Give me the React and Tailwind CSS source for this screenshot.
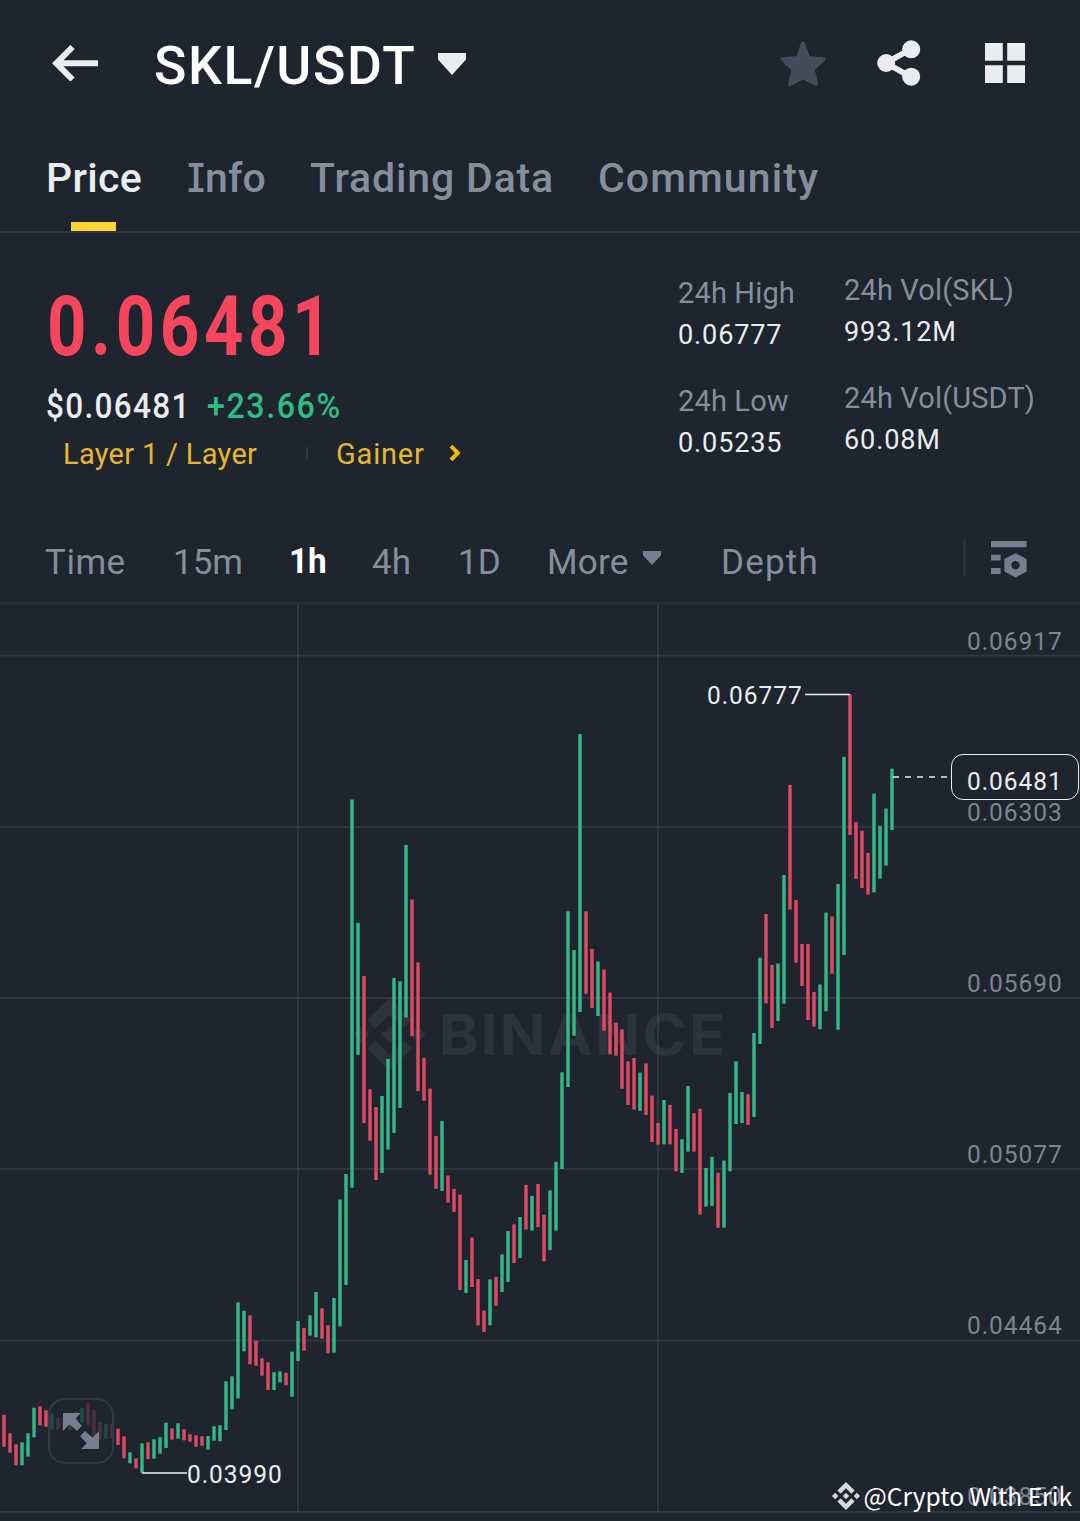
import React from "react";

const UP = "#35b887";
const DOWN = "#e04a63";

// One entry per hour: direction, high and low in chart pixels.
const CANDLES = [
  ["r", 1414.7, 1446.7], ["r", 1433.3, 1452.7], ["r", 1444.3, 1465.3], ["g", 1442.3, 1465.3], ["g", 1433.3, 1456.7],
  ["g", 1407.7, 1437.3], ["r", 1406.3, 1425.3], ["r", 1410.3, 1426.7], ["g", 1413.3, 1429.3], ["r", 1417.3, 1429.3],
  ["r", 1418, 1430], ["g", 1416, 1430], ["g", 1412, 1427], ["g", 1408, 1422.7], ["r", 1403, 1425],
  ["r", 1410, 1437], ["r", 1422, 1440], ["g", 1424, 1439], ["r", 1424, 1438], ["r", 1428.7, 1445],
  ["r", 1436.3, 1458.3], ["g", 1452.3, 1463.3], ["r", 1458.3, 1468.3], ["g", 1443.3, 1472.7], ["r", 1442.3, 1459],
  ["g", 1439.3, 1458.7], ["g", 1437.3, 1453.7], ["g", 1422.7, 1448], ["r", 1428.3, 1439.7], ["g", 1423.3, 1438.7],
  ["r", 1429.3, 1440.3], ["r", 1434.3, 1441.7], ["r", 1435.3, 1446.7], ["r", 1436.3, 1445.7], ["g", 1436, 1449.7],
  ["g", 1426.3, 1440.7], ["g", 1425.3, 1441.3], ["g", 1381.3, 1430], ["g", 1376.3, 1409.3], ["g", 1302.3, 1398.3],
  ["g", 1310.7, 1351.3], ["r", 1315.3, 1364.3], ["r", 1340.7, 1365.7], ["r", 1358.3, 1375.7], ["r", 1362.3, 1390],
  ["g", 1372.3, 1390], ["g", 1371.3, 1382.3], ["r", 1372.7, 1385.3], ["g", 1351.7, 1396.7], ["g", 1321, 1361],
  ["r", 1328, 1350.7], ["g", 1315.3, 1335.7], ["g", 1292, 1337.3], ["r", 1308.3, 1338.7], ["r", 1325.3, 1353.3],
  ["g", 1298, 1352.7], ["g", 1199.5, 1326.4], ["g", 1174, 1285], ["g", 799.6, 1187.7], ["g", 922.8, 1054.9],
  ["r", 976, 1123], ["r", 1089.3, 1140.7], ["r", 1107, 1180], ["g", 1096, 1173], ["g", 1059, 1149.6],
  ["g", 978, 1133], ["g", 981.3, 1107.8], ["g", 845, 1017.5], ["r", 899.5, 1036], ["r", 962.4, 1091],
  ["r", 1058, 1100.8], ["r", 1088.5, 1174.7], ["r", 1136, 1188.8], ["g", 1121, 1191], ["r", 1175.5, 1202.5],
  ["r", 1189, 1212], ["r", 1194.7, 1290], ["g", 1260, 1293], ["r", 1237.6, 1287], ["r", 1279, 1325.3],
  ["r", 1310.5, 1332], ["g", 1279.4, 1325.3], ["r", 1276.9, 1305.7], ["g", 1254.3, 1292], ["g", 1231, 1282],
  ["r", 1224.3, 1263], ["g", 1217, 1258], ["r", 1185, 1229.5], ["g", 1195.8, 1230.6], ["r", 1184, 1227],
  ["r", 1214.7, 1261.3], ["g", 1190.3, 1250.2], ["g", 1161.8, 1230.6], ["g", 1072.3, 1169], ["g", 911.3, 1087],
  ["g", 950, 1035.8], ["g", 733.9, 1012], ["r", 911.3, 993.8], ["r", 948.9, 1008], ["g", 961.4, 1016],
  ["r", 969.5, 1030.7], ["r", 992.5, 1054.3], ["r", 1022.6, 1055.7], ["r", 1029.3, 1088.8], ["r", 1061.4, 1105],
  ["r", 1058, 1109.5], ["g", 1072.6, 1110.8], ["r", 1063.5, 1114.9], ["r", 1095.6, 1142], ["r", 1123, 1144.6],
  ["g", 1100, 1144.3], ["r", 1105, 1144.3], ["r", 1129, 1171.3], ["g", 1139.2, 1173], ["g", 1086, 1151.7],
  ["r", 1113.2, 1151.7], ["r", 1108.8, 1214.6], ["g", 1168, 1206.5], ["g", 1157, 1205.8], ["r", 1172.7, 1227.8],
  ["g", 1160.5, 1227.8], ["g", 1093, 1171.3], ["g", 1061.4, 1124], ["g", 1092, 1123], ["r", 1094.2, 1125],
  ["g", 1033, 1117], ["g", 957.7, 1043.9], ["r", 914, 1003.3], ["r", 965, 1028], ["g", 963.5, 1021],
  ["g", 875, 1003.7], ["r", 785, 909.5], ["r", 900, 962.7], ["r", 944, 986], ["r", 944, 1020],
  ["r", 992, 1026.6], ["g", 984.5, 1029.3], ["g", 912.6, 1011.3], ["r", 916.4, 973.8], ["g", 883.9, 1029.7],
  ["g", 756.8, 955], ["r", 694.4, 834.9], ["r", 821.9, 878.9], ["r", 830.7, 888], ["r", 852.9, 894.6],
  ["g", 793.6, 892.3], ["g", 825.7, 878.5], ["g", 808.5, 865.5], ["g", 768.7, 830],
];

const GRID_Y = [655.5, 826.8, 998, 1169, 1340.5, 1511.8];
const AXIS = ["0.06917", "0.06303", "0.05690", "0.05077", "0.04464", "0.03850"];

function BinanceMark({ className }) {
  return (
    <svg viewBox="0 0 126.6 126.6" className={className} fill="currentColor">
      <path d="M38.7 53.2 63.3 28.6l24.6 24.6 14.3-14.3L63.3 0 24.4 38.9zM0 63.3 14.3 49l14.3 14.3-14.3 14.3zM38.7 73.4 63.3 98l24.6-24.6 14.3 14.3-38.9 38.9-38.9-38.9zM98 63.3 112.3 49l14.3 14.3-14.3 14.3zM77.8 63.3 63.3 48.8 48.8 63.3l14.5 14.5z" />
    </svg>
  );
}

function Header() {
  return (
    <header className="flex h-[130px] items-start">
      <svg viewBox="0 0 46 36" className="mt-[45px] ml-[52px] h-9 w-[46px]" fill="none" stroke="#eaecef" strokeWidth="6">
        <path d="M46 18.3H5M20.5 2 4.3 18.3 20.5 34.5" />
      </svg>
      <h1 className="mt-[39px] ml-[56px] w-[284px] text-[53.5px] leading-none font-medium tracking-[1.6px] text-white">SKL/USDT</h1>
      <svg viewBox="0 0 28 22" className="mt-[53px] h-[22px] w-7" fill="#eaecef">
        <path d="M0 0h28v6.5L14 22 0 6.5z" />
      </svg>
      <svg viewBox="0 0 46 46" className="mt-[41px] ml-[314px] h-[46px] w-[46px]" fill="#434c5a" stroke="#434c5a" strokeWidth="4" strokeLinejoin="round">
        <path d="m23 2.5 5.2 14.6L43.5 18.3 32.6 28.3 36 43 23 36.3 10 43l3.4-14.7L2.5 18.3l15.3-1.2z" />
      </svg>
      <svg viewBox="0 0 44 46" className="mt-10 ml-[51px] h-[46px] w-11" fill="#eaecef">
        <path d="M9 23 34 9M9 23l25 14" stroke="#eaecef" strokeWidth="6" />
        <circle cx="9.2" cy="23" r="9" />
        <circle cx="34.2" cy="9.3" r="9" />
        <circle cx="34.2" cy="36.7" r="9" />
      </svg>
      <svg viewBox="0 0 40 40" className="mt-[43px] ml-16 h-10 w-10" fill="#eaecef">
        <path d="M0 0h17.8v17.8H0zM22.2 0H40v17.8H22.2zM0 22.2h17.8V40H0zM22.2 22.2H40V40H22.2z" />
      </svg>
    </header>
  );
}

function Tabs() {
  return (
    <nav className="flex h-[103px] border-b-2 border-[#2f3540] pt-7 pl-[46px] text-[41px] leading-none font-medium whitespace-nowrap text-[#848e9c]">
      <div className="flex w-[141px] flex-col text-[#eaecef]">
        <span className="tracking-[0.3px]">Price</span>
        <span className="mt-[23px] ml-[25px] h-[9px] w-[45px] bg-[#fcd535]" />
      </div>
      <div className="w-[123px]">
        <span className="font-[Inter] text-[40px] [font-feature-settings:'cv08']">I</span>nfo
      </div>
      <div className="w-[288px] tracking-[0.85px]">Trading Data</div>
      <div className="tracking-[1.1px]">Community</div>
    </nav>
  );
}

function Stat({ label, value }) {
  return (
    <div className="h-[108px] leading-none whitespace-nowrap">
      <div className="text-[29px] tracking-[0.15px] text-[#848e9c]">{label}</div>
      <div className="mt-[13px] origin-left scale-x-[0.95] text-[28.5px] tracking-[0.9px] text-[#eaecef]">{value}</div>
    </div>
  );
}

function Summary() {
  return (
    <section className="flex h-[290px] leading-none whitespace-nowrap">
      <div className="w-[678px] pt-[52px] pl-[47px]">
        <div className="h-[84px] origin-left scale-x-[0.82] text-[84px] leading-none font-bold tracking-[5.6px] text-[#f6465d]">0.06481</div>
        <div className="mt-5 -ml-px flex h-[35px] text-[35px] font-medium">
          <span className="w-[161px] origin-left scale-x-[0.9] tracking-[1.5px] text-[#eaecef]">$0.06481</span>
          <span className="origin-left scale-x-[0.92] tracking-[1.7px] text-[#2ebd85]">+23.66%</span>
        </div>
        <div className="mt-[16px] flex h-[29px] text-[29px] text-[#e6b62f]">
          <span className="ml-[16px] w-[243px] tracking-[0.3px]">Layer 1 / Layer</span>
          <span className="mt-[7px] h-3 w-0.5 bg-[#333a45]" />
          <span className="ml-[28px] w-[114px] tracking-[0.8px]">Gainer</span>
          <svg viewBox="0 0 12 18" className="mt-[4px] -ml-px h-[18px] w-3" fill="none" stroke="#f0b90b" strokeWidth="4">
            <path d="M2 2.2 8.8 9 2 15.8" />
          </svg>
        </div>
      </div>
      <div className="w-[166px] pt-[46px]">
        <Stat label="24h High" value="0.06777" />
        <Stat label="24h Low" value="0.05235" />
      </div>
      <div className="pt-[43px]">
        <Stat label="24h Vol(SKL)" value="993.12M" />
        <Stat label="24h Vol(USDT)" value="60.08M" />
      </div>
    </section>
  );
}

function Intervals() {
  return (
    <div className="flex h-[82px] items-start border-b-3 border-[#272d38] pt-[22px] pl-[45px] text-[35px] leading-none whitespace-nowrap text-[#848e9c]">
      <span className="w-[128px] tracking-[0.5px]">Time</span>
      <span className="w-[116px]">15m</span>
      <span className="-mt-px w-[83px] origin-left scale-x-[0.95] font-bold text-white">1h</span>
      <span className="w-[86px]">4h</span>
      <span className="w-[89px]">1D</span>
      <span className="w-[96px] tracking-[0.2px]">More</span>
      <svg viewBox="0 0 18 14" className="mt-[6px] h-3.5 w-[18px]" fill="#767f90">
        <path d="M0 0h18v4.2L9 14 0 4.2z" />
      </svg>
      <span className="ml-[60px] w-[242px] tracking-[1.2px]">Depth</span>
      <span className="-mt-[5px] h-9 w-[3px] bg-[#2b323d]" />
      <svg viewBox="0 0 36 37" className="-mt-1 ml-[25px] h-[37px] w-9" fill="#767f90">
        <path d="M0 0h35.5v6.3H0zM0 13.7h9.6v5.8H0zM0 27h9.6v6H0z" />
        <path fillRule="evenodd" d="M24.5 12.2 35.6 18v12.5l-11.1 6-11.1-6V18zM24.5 20.1a4.2 4.2 0 1 0 0 8.4 4.2 4.2 0 0 0 0-8.4z" />
      </svg>
    </div>
  );
}

function Chart() {
  return (
    <section className="relative h-[916px] overflow-hidden">
      <div className="absolute top-[393px] left-[353px] flex items-center text-[#2d323d]">
        <BinanceMark className="h-[73px] w-[73px]" />
        <span className="ml-[13px] origin-left scale-x-[1.053] font-[Inter] text-[57px] leading-none font-bold tracking-[2px]">BINANCE</span>
      </div>
      <svg viewBox="0 605 1080 916" className="absolute inset-0 h-[916px] w-[1080px]">
        {GRID_Y.map((y) => (
          <path key={y} d={`M0 ${y}H1080`} stroke="#a0aec0" strokeOpacity="0.13" strokeWidth="1.8" />
        ))}
        <path d="M298 605V1512M658 605V1512" stroke="#a0aec0" strokeOpacity="0.13" strokeWidth="2" />
        {CANDLES.map(([dir, high, low], i) => (
          <path key={i} d={`M${4 + i * 6} ${high}V${low}`} stroke={dir === "g" ? UP : DOWN} strokeWidth="3.4" />
        ))}
        <path d="M805 694.4H850M142 1473H187" stroke="#eaecef" strokeWidth="1.5" />
        <path d="M893 777H948" stroke="#eaecef" strokeWidth="1.4" strokeDasharray="6 6" />
      </svg>
      <div className="absolute top-0 left-[967px] flex flex-col pt-[22.5px] text-[26.5px] leading-none tracking-[1px] text-[#7b8492]">
        {AXIS.map((price) => (
          <span key={price} className="h-[171.2px] origin-left scale-x-[0.925]">{price}</span>
        ))}
      </div>
      <span className="absolute top-[77px] left-[707px] origin-left scale-x-[0.925] text-[26.5px] leading-none tracking-[1px] text-[#eaecef]">0.06777</span>
      <span className="absolute top-[856px] left-[187px] origin-left scale-x-[0.925] text-[26.5px] leading-none tracking-[1px] text-[#eaecef]">0.03990</span>
      <div className="absolute top-[149px] left-[951px] flex h-[46px] w-32 rounded-xl border-[1.5px] border-[#eaecef] bg-[#1f252f] pt-[13px] pl-[15px] text-[26.5px] leading-none tracking-[1px] text-[#eaecef]">
        <span className="origin-left scale-x-[0.925]">0.06481</span>
      </div>
      <div className="absolute top-[793px] left-12 h-[66px] w-[66px] rounded-[17px] border-[2.5px] border-[#343a45] bg-[#1f252f]/75 p-[12.5px]">
        <svg viewBox="0 0 36 36" className="h-9 w-9" fill="#767f90">
          <path d="M0 0h17.8l-5.5 5.7 6.6 7-4.9 5.2-7.6-6.7L0 18zM36 36H18.2l5.5-5.7-6.6-7 4.9-5.2 7.6 6.7L36 18z" />
        </svg>
      </div>
      <div className="absolute right-2 bottom-[10px] flex items-center whitespace-nowrap text-white">
        <BinanceMark className="h-7 w-7 text-[#d9d9d9]" />
        <span className="mb-[2px] ml-[3px] font-['Noto_Sans_CJK_SC'] text-[24.6px] leading-7">@Crypto With Erik</span>
      </div>
    </section>
  );
}

export default function App() {
  return (
    <main className="h-[1521px] w-[1080px] overflow-hidden bg-[#1f252f] font-['Roboto',sans-serif]">
      <Header />
      <Tabs />
      <Summary />
      <Intervals />
      <Chart />
    </main>
  );
}
